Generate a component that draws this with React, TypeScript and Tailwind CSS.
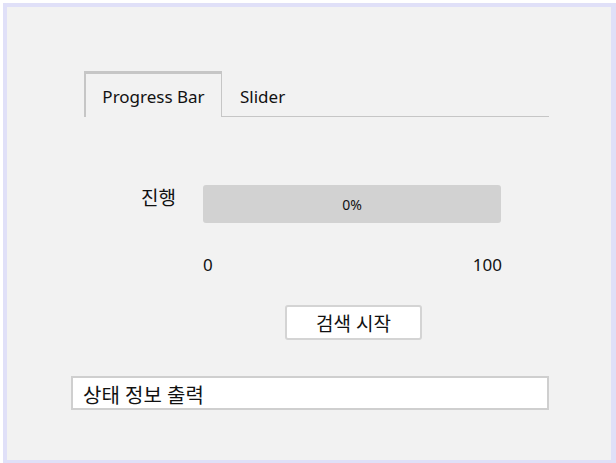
import { useState } from "react";

const FONT = "font-['Noto_Sans','Noto_Sans_CJK_KR',sans-serif]";

const App = () => {
  const [tab, setTab] = useState<"progress" | "slider">("progress");
  const [value] = useState(0);

  return (
    <div className={`w-[616px] h-[463px] overflow-hidden bg-white pl-[3px] pt-[3px] ${FONT} text-[#111]`}>
      <div className="w-[613px] h-[460px] border-l-4 border-t-4 border-r-[5px] border-b-[3px] border-[#e0e0f8] bg-[#f2f2f2] flex flex-col">
        {/* Tabs */}
        <div className="ml-[77px] mt-[64px] w-[465px] flex items-end h-[46px]">
          <button
            onClick={() => setTab("progress")}
            className="h-[46px] w-[138px] border-t-[3px] border-l-2 border-r border-[#c6c6c6] bg-[#f2f2f2] text-[17px] pt-[3px]"
          >
            Progress Bar
          </button>
          <button
            onClick={() => setTab("slider")}
            className="flex-1 h-[46px] border-b border-[#c6c6c6] text-left pl-[18px] text-[17px] pt-[6px]"
          >
            Slider
          </button>
        </div>

        {tab === "progress" && (
          <>
            {/* Progress row */}
            <div className="flex mt-[68px]">
              <div className="w-[169px] text-right text-[19px] leading-[26px]">진행</div>
              <div className="ml-[27px] w-[298px] h-[38px] rounded-[3px] bg-[#d2d2d2] flex items-center justify-center text-[14px]">
                {value}%
              </div>
            </div>

            {/* Scale labels */}
            <div className="ml-[196px] w-[299px] mt-[30px] flex justify-between text-[17px] leading-[24px]">
              <span>0</span>
              <span>100</span>
            </div>

            {/* Start button */}
            <div className="ml-[278px] mt-[28px]">
              <button className="w-[137px] h-[35px] rounded-[3px] border-2 border-[#d4d4d4] bg-white text-[19px] leading-none pt-[3px]">
                검색 시작
              </button>
            </div>

            {/* Status output */}
            <div className="ml-[64px] mt-[36px] w-[478px] h-[34px] border-2 border-[#cfcfcf] bg-white flex items-center pl-[10px] pt-[5px] text-[20px] leading-none">
              상태 정보 출력
            </div>
          </>
        )}
      </div>
    </div>
  );
};

export default App;
